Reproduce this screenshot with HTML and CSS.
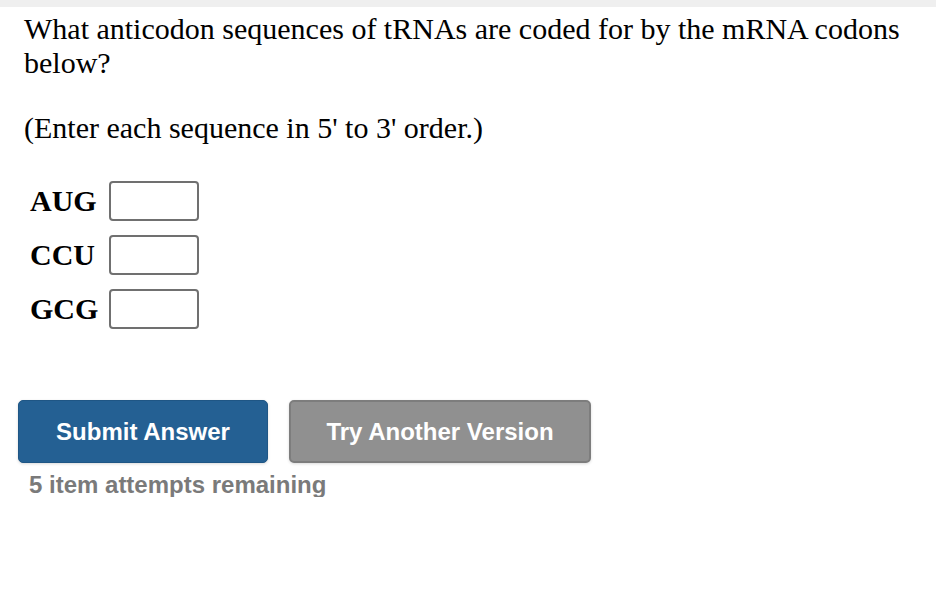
FILE: index.html
```html
<!DOCTYPE html>
<html>
<head>
<meta charset="utf-8">
<link rel="stylesheet" href="styles.css">
</head>
<body>
<div class="topbar"></div>
<div class="content">
  <p class="question">What anticodon sequences of tRNAs are coded for by the mRNA codons below?</p>
  <p class="note">(Enter each sequence in 5' to 3' order.)</p>
  <div class="rows">
    <div class="row"><span class="label">AUG</span><input class="box" type="text"></div>
    <div class="row"><span class="label">CCU</span><input class="box" type="text"></div>
    <div class="row"><span class="label">GCG</span><input class="box" type="text"></div>
  </div>
  <div class="actions">
    <button class="btn submit">Submit Answer</button>
    <button class="btn another">Try Another Version</button>
  </div>
  <div class="attempts">5 item attempts remaining</div>
</div>
</body>
</html>
```
FILE: styles.css
```css
html, body {
  margin: 0;
  padding: 0;
  background: #fff;
}
.topbar {
  height: 7px;
  background: #efefef;
}
.content {
  padding: 0 0 0 24px;
  font-family: "Liberation Serif", "Times New Roman", serif;
  color: #000;
}
.question {
  margin: 5px 0 0 0;
  font-size: 30px;
  line-height: 34px;
  width: 890px;
}
.note {
  margin: 31px 0 0 0;
  font-size: 30px;
  line-height: 34px;
}
.rows {
  margin-top: 36px;
  display: flex;
  flex-direction: column;
  gap: 14px;
  padding-left: 6px;
}
.row {
  display: flex;
  align-items: center;
  height: 40px;
}
.label {
  font-weight: bold;
  font-size: 30px;
  width: 79px;
}
.box {
  box-sizing: border-box;
  width: 90px;
  height: 40px;
  border: 2px solid #707070;
  border-radius: 4px;
  margin: 0;
  padding: 0;
  background: #fff;
}
.actions {
  margin-top: 71px;
  margin-left: -6px;
  display: flex;
  gap: 21px;
}
.btn {
  box-sizing: border-box;
  height: 63px;
  border-radius: 5px;
  font-family: "Liberation Sans", Arial, sans-serif;
  font-weight: bold;
  font-size: 24px;
  color: #fff;
  margin: 0;
  padding: 0;
  box-shadow: 0 1px 3px rgba(0,0,0,0.15);
}
.submit {
  width: 250px;
  background: #246093;
  border: 1px solid #1f5685;
}
.another {
  width: 302px;
  background: #909090;
  border: 2px solid #7d7d7d;
}
.attempts {
  margin-top: 9px;
  margin-left: 5px;
  font-family: "Liberation Sans", Arial, sans-serif;
  font-weight: bold;
  font-size: 24px;
  line-height: 25px;
  color: #7a7a7a;
}
```
